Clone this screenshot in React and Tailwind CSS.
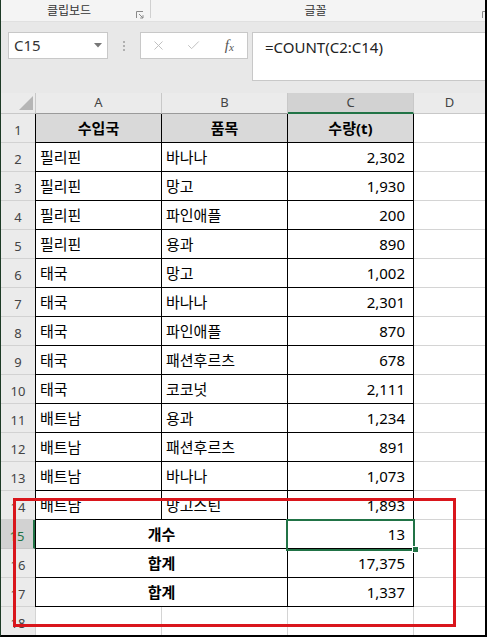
import React from "react";
import { X, Check } from "lucide-react";

const rows = [
  ["필리핀", "바나나", "2,302"],
  ["필리핀", "망고", "1,930"],
  ["필리핀", "파인애플", "200"],
  ["필리핀", "용과", "890"],
  ["태국", "망고", "1,002"],
  ["태국", "바나나", "2,301"],
  ["태국", "파인애플", "870"],
  ["태국", "패션후르츠", "678"],
  ["태국", "코코넛", "2,111"],
  ["배트남", "용과", "1,234"],
  ["배트남", "패션후르츠", "891"],
  ["배트남", "바나나", "1,073"],
  ["배트남", "망고스틴", "1,893"],
];

function Launcher() {
  return (
    <svg width="8" height="8" viewBox="0 0 8 8">
      <path d="M0.5 7V0.5H7" stroke="#8a8a8a" fill="none" strokeWidth="1" />
      <path d="M3 3L7 7M7 4.2V7H4.2" stroke="#8a8a8a" fill="none" strokeWidth="1" />
    </svg>
  );
}

function RowHead({ n, active }) {
  return (
    <div
      className={
        active
          ? "w-[34px] shrink-0 flex items-end justify-center pb-[3px] text-[13px] leading-[18px] text-[#217346] bg-[#d2d2d2] border-b border-[#c6c6c6] border-r-2 border-r-[#217346]"
          : "w-[34px] shrink-0 flex items-end justify-center pb-[3px] text-[13px] leading-[18px] text-[#444] bg-[#ebebeb] border-b border-[#d2d2d2]"
      }
    >
      {n}
    </div>
  );
}

export default function App() {
  return (
    <div className="relative w-[487px] h-[637px] overflow-hidden bg-white font-['Noto_Sans','Noto_Sans_CJK_KR',sans-serif] text-black border-l border-l-[#1d3a26] border-r-2 border-r-black border-b-2 border-b-black">
      {/* ribbon group labels */}
      <div className="flex h-[22px] bg-[#f4f4f4] border-b border-[#e0e0e0]">
        <div className="relative w-[150px] shrink-0 flex items-center justify-center pr-[14px] text-[12px] text-[#333]">
          클립보드
          <span className="absolute right-[7px] top-[11px] flex">
            <Launcher />
          </span>
          <span className="absolute right-0 top-0 h-[18px] w-px bg-[#d0d0d0]" />
        </div>
        <div className="relative flex-1 flex items-center justify-center pr-[5px] text-[12px] text-[#333]">
          글꼴
          <span className="absolute right-[-5px] top-[11px] flex">
            <Launcher />
          </span>
        </div>
      </div>

      {/* formula bar */}
      <div className="flex items-start h-[71px] bg-[#e8e8e8] pt-[10px] pl-[7px]">
        <div className="w-[100px] h-[27px] shrink-0 bg-white border border-[#c8c8c8] flex items-center justify-between pl-[5px] pr-[5px]">
          <span className="text-[15px] text-[#333] leading-none">C15</span>
          <svg width="8" height="5" viewBox="0 0 8 5">
            <path d="M0 0H8L4 4.5Z" fill="#777" />
          </svg>
        </div>
        <div className="w-[32px] h-[27px] shrink-0 flex flex-col items-center justify-center gap-[2px]">
          <span className="w-[2px] h-[2px] bg-[#b0b0b0]" />
          <span className="w-[2px] h-[2px] bg-[#b0b0b0]" />
          <span className="w-[2px] h-[2px] bg-[#b0b0b0]" />
        </div>
        <div className="w-[108px] h-[27px] shrink-0 bg-white border border-[#c8c8c8] flex items-center">
          <span className="w-[36px] flex justify-center text-[#bdbdbd]">
            <X size={15} strokeWidth={1.5} />
          </span>
          <span className="w-[36px] flex justify-center text-[#bdbdbd]">
            <Check size={15} strokeWidth={1.5} />
          </span>
          <span className="w-[36px] flex justify-center items-center text-[#555] font-['Liberation_Serif',serif] italic text-[15px] leading-none">
            f<span className="text-[11px] mt-[3px]">x</span>
          </span>
        </div>
        <div className="flex-1 h-[49px] ml-[4px] bg-white border border-[#c8c8c8] border-r-0 pl-[12px] pt-[4px] text-[15px] leading-[20px] text-[#222]">
          =COUNT(C2:C14)
        </div>
      </div>

      {/* column headers */}
      <div className="flex h-[21px] text-[13px] text-[#444]">
        <div className="relative w-[34px] shrink-0 bg-[#ebebeb] border-b border-[#c8c8c8]">
          <svg className="absolute right-[2px] bottom-[3px]" width="14" height="14" viewBox="0 0 14 14">
            <path d="M14 0V14H0Z" fill="#b5b5b5" />
          </svg>
        </div>
        <div className="w-[127px] shrink-0 bg-[#ebebeb] border-l border-r border-b border-[#c8c8c8] border-b-[#9a9a9a] flex items-center justify-center">A</div>
        <div className="w-[126px] shrink-0 bg-[#ebebeb] border-r border-b border-[#c8c8c8] border-b-[#9a9a9a] flex items-center justify-center">B</div>
        <div className="w-[126px] shrink-0 bg-[#d2d2d2] border-r border-[#c8c8c8] border-b-2 border-b-[#217346] flex items-center justify-center text-[#444]">C</div>
        <div className="flex-1 bg-[#ebebeb] border-b border-[#c8c8c8] flex items-center justify-center">D</div>
      </div>

      {/* row 1 */}
      <div className="flex h-[29px] text-[15px]">
        <RowHead n={1} />
        <div className="w-[127px] shrink-0 bg-[#d9d9d9] border-l border-r border-b border-black flex items-center justify-center font-bold">수입국</div>
        <div className="w-[126px] shrink-0 bg-[#d9d9d9] border-r border-b border-black flex items-center justify-center font-bold">품목</div>
        <div className="w-[126px] shrink-0 bg-[#d9d9d9] border-r border-b border-black flex items-center justify-center font-bold">수량(t)</div>
        <div className="flex-1 border-b border-[#d4d4d4]" />
      </div>

      {rows.map((r, i) => (
        <div key={i} className="flex h-[29px] text-[15px]">
          <RowHead n={i + 2} />
          <div className="w-[127px] shrink-0 border-l border-r border-b border-black flex items-center pl-[4px]">{r[0]}</div>
          <div className="w-[126px] shrink-0 border-r border-b border-black flex items-center pl-[4px]">{r[1]}</div>
          <div className="w-[126px] shrink-0 border-r border-b border-black flex items-center justify-end pr-[8px]">{r[2]}</div>
          <div className="flex-1 border-b border-[#d4d4d4]" />
        </div>
      ))}

      {[
        ["개수", "13", 15],
        ["합계", "17,375", 16],
        ["합계", "1,337", 17],
      ].map(([label, val, n]) => (
        <div key={n} className="flex h-[29px] text-[15px]">
          <RowHead n={n} active={n === 15} />
          <div className="w-[253px] shrink-0 border-l border-r border-b border-black flex items-center justify-center font-bold">{label}</div>
          <div className="w-[126px] shrink-0 border-r border-b border-black flex items-center justify-end pr-[8px]">{val}</div>
          <div className="flex-1 border-b border-[#d4d4d4]" />
        </div>
      ))}

      {/* row 18 */}
      <div className="flex h-[29px] text-[15px]">
        <RowHead n={18} />
        <div className="w-[127px] shrink-0 border-l border-r border-b border-[#d4d4d4]" />
        <div className="w-[126px] shrink-0 border-r border-b border-[#d4d4d4]" />
        <div className="w-[126px] shrink-0 border-r border-b border-[#d4d4d4]" />
        <div className="flex-1 border-b border-[#d4d4d4]" />
      </div>

      {/* selected cell */}
      <div className="absolute left-[285px] top-[519px] w-[129px] h-[32px] border-2 border-[#217346]" />
      <div className="absolute left-[411px] top-[546px] w-[7px] h-[7px] bg-[#217346] border border-white" />

      {/* red annotation box */}
      <div className="absolute left-[12px] top-[498px] w-[443px] h-[129px] border-[3px] border-[#d9161c]" />
    </div>
  );
}
